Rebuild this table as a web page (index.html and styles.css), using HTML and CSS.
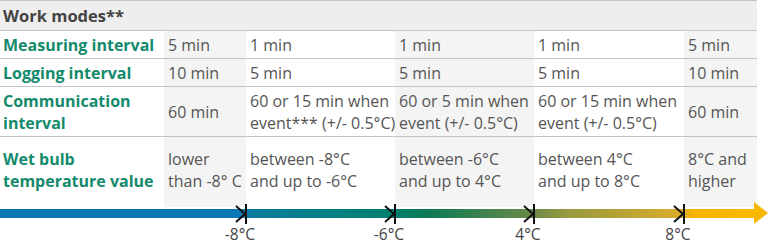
FILE: index.html
```html
<!DOCTYPE html>
<html>
<head>
<meta charset="utf-8">
<link rel="stylesheet" href="styles.css">
</head>
<body>
<div class="wrap">
  <div class="table">
    <div class="head">Work modes**</div>

    <div class="lab">Measuring interval</div>
    <div class="cell c1">5 min</div>
    <div class="cell">1 min</div>
    <div class="cell c3">1 min</div>
    <div class="cell">1 min</div>
    <div class="cell c5">5 min</div>

    <div class="lab">Logging interval</div>
    <div class="cell c1">10 min</div>
    <div class="cell">5 min</div>
    <div class="cell c3">5 min</div>
    <div class="cell">5 min</div>
    <div class="cell c5">10 min</div>

    <div class="lab tall">Communication<br>interval</div>
    <div class="cell c1 tall mid">60 min</div>
    <div class="cell tall">60 or 15 min when<br>event*** (+/- 0.5°C)</div>
    <div class="cell c3 tall">60 or 5 min when<br>event (+/- 0.5°C)</div>
    <div class="cell tall">60 or 15 min when<br>event (+/- 0.5°C)</div>
    <div class="cell c5 tall mid">60 min</div>

    <div class="lab last">Wet bulb<br>temperature value</div>
    <div class="cell c1 last">lower<br>than -8° C</div>
    <div class="cell last">between -8°C<br>and up to -6°C</div>
    <div class="cell c3 last">between -6°C<br>and up to 4°C</div>
    <div class="cell last">between 4°C<br>and up to 8°C</div>
    <div class="cell c5 last">8°C and<br>higher</div>
  </div>

  <div class="scale">
    <div class="bar"></div>
    <div class="head-arrow"></div>
    <div class="mark" style="left:246px">
      <svg width="14" height="20" viewBox="0 0 14 20"><polyline points="2,2 11,10 2,18" fill="none" stroke="#111" stroke-width="2"/><line x1="12" y1="0" x2="12" y2="20" stroke="#111" stroke-width="2"/></svg>
      <span>-8°C</span>
    </div>
    <div class="mark" style="left:395px">
      <svg width="14" height="20" viewBox="0 0 14 20"><polyline points="2,2 11,10 2,18" fill="none" stroke="#111" stroke-width="2"/><line x1="12" y1="0" x2="12" y2="20" stroke="#111" stroke-width="2"/></svg>
      <span>-6°C</span>
    </div>
    <div class="mark" style="left:534px">
      <svg width="14" height="20" viewBox="0 0 14 20"><polyline points="2,2 11,10 2,18" fill="none" stroke="#111" stroke-width="2"/><line x1="12" y1="0" x2="12" y2="20" stroke="#111" stroke-width="2"/></svg>
      <span>4°C</span>
    </div>
    <div class="mark" style="left:684px">
      <svg width="14" height="20" viewBox="0 0 14 20"><polyline points="2,2 11,10 2,18" fill="none" stroke="#111" stroke-width="2"/><line x1="12" y1="0" x2="12" y2="20" stroke="#111" stroke-width="2"/></svg>
      <span>8°C</span>
    </div>
  </div>
</div>
</body>
</html>
```
FILE: styles.css
```css
html, body {
  margin: 0;
  padding: 0;
  background: #ffffff;
}
body {
  font-family: "Open Sans", "Noto Sans", sans-serif;
  font-size: 16px;
  color: #555555;
  width: 768px;
  height: 244px;
  overflow: hidden;
}
.wrap {
  width: 768px;
}
.table {
  display: grid;
  grid-template-columns: 164px 82px 149px 139px 150px 73px;
  grid-template-rows: 31px 28px 28px 50px 70px;
  width: 757px;
}
.head {
  grid-column: 1 / -1;
  background: #eeeeee;
  border-top: 1px solid #c4c4c4;
  border-bottom: 1px solid #c4c4c4;
  box-sizing: border-box;
  font-weight: 700;
  font-size: 16.5px;
  color: #444444;
  padding: 0 0 1px 3px;
  display: flex;
  align-items: center;
}
.lab, .cell {
  border-bottom: 1px solid #c4c4c4;
  box-sizing: border-box;
  line-height: 22px;
  display: flex;
  align-items: center;
  white-space: nowrap;
}
.lab {
  color: #138a6c;
  font-weight: 700;
  padding-left: 3px;
}
.cell {
  padding-left: 4px;
}
.c1, .c3, .c5 {
  background: #f4f4f4;
}
.tall {
  align-items: center;
}
.last {
  border-bottom: none;
  align-items: flex-start;
  padding-top: 11px;
}
.scale {
  position: relative;
  height: 37px;
}
.bar {
  position: absolute;
  left: 0;
  top: 2px;
  width: 756px;
  height: 9px;
  background: linear-gradient(to right,
    #0a78b4 0px, #0a78b4 246px,
    #087d9c 252px, #00806f 395px,
    #0a7a55 425px, #6b8a48 534px,
    #969940 565px, #dcad2a 684px,
    #f6b400 692px, #f9b800 756px);
}
.head-arrow {
  position: absolute;
  left: 754px;
  top: -5px;
  width: 0;
  height: 0;
  border-top: 11px solid transparent;
  border-bottom: 11px solid transparent;
  border-left: 14px solid #f9b800;
}
.mark {
  position: absolute;
  top: -3px;
  width: 0;
}
.mark svg {
  position: absolute;
  left: -12px;
  top: 0;
  display: block;
}
.mark span {
  position: absolute;
  top: 20px;
  left: -31px;
  width: 50px;
  text-align: center;
  color: #444444;
  font-size: 15.5px;
  line-height: 20px;
}
```
